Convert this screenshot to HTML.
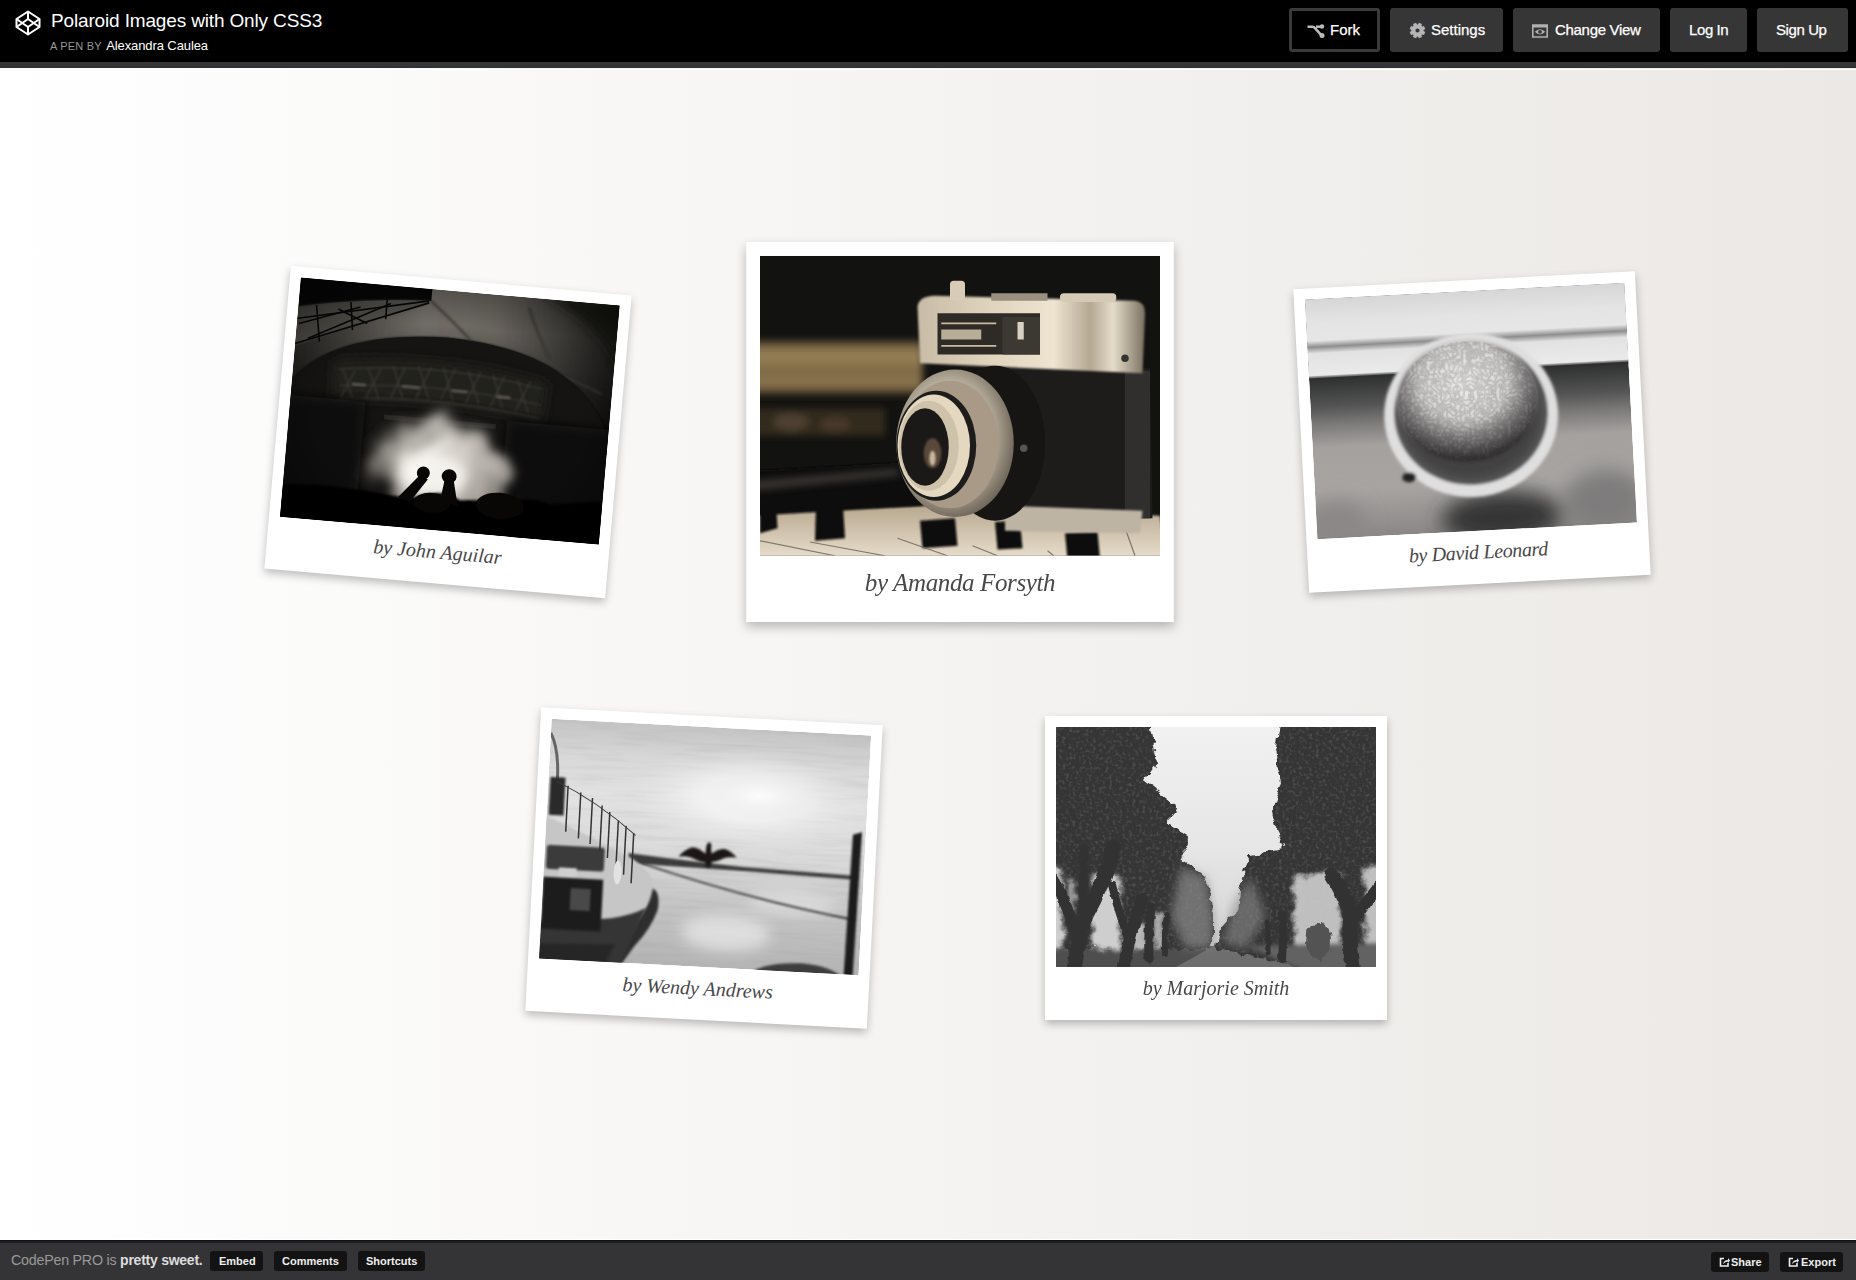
<!DOCTYPE html>
<html><head><meta charset="utf-8">
<style>
*{margin:0;padding:0;box-sizing:border-box}
html,body{width:1856px;height:1280px;overflow:hidden;background:#000;font-family:"Liberation Sans",sans-serif}
#hdr{position:absolute;left:0;top:0;width:1856px;height:62px;background:#000}
#hbar{position:absolute;left:0;top:62px;width:1856px;height:6px;background:linear-gradient(#383839,#2f3133)}
#content{position:absolute;left:0;top:68px;width:1856px;height:1172px;background:linear-gradient(to right,#ffffff 0%,#ebe8e5 100%);overflow:hidden}
#content:before{content:"";position:absolute;left:0;top:1px;width:100%;height:1px;background:#fff}
#content:after{content:"";position:absolute;left:0;bottom:0;width:100%;height:1px;background:#fff}
#ftr{position:absolute;left:0;top:1240px;width:1856px;height:40px;background:#343436;border-top:3px solid #1d1e20}
#ftr:before{content:"";position:absolute;left:0;top:-3px;width:100%;height:1px;background:#111214}
.logo{position:absolute;left:15px;top:10px}
.title{position:absolute;left:51px;top:10px;color:#fff;font-size:19px;letter-spacing:-0.15px;white-space:nowrap}
.sub{position:absolute;left:50px;top:36px;white-space:nowrap}
.sub .a{color:#999;font-size:11px;letter-spacing:0.2px}
.sub .b{color:#fff;font-size:13px;letter-spacing:-0.1px}
.btn{position:absolute;top:8px;height:44px;background:#363636;border-radius:3px;color:#fff;font-size:15px;line-height:44px;white-space:nowrap}
.btn span{position:absolute;top:0;-webkit-text-stroke:0.25px #fff}
.fbtn{position:absolute;top:1251px;height:20px;background:#131313;border-radius:3px;color:#eee;font-size:11px;font-weight:bold;line-height:20px;white-space:nowrap}
.fbtn span{position:absolute;top:0}
.pol{position:absolute;width:342px;height:304px;background:#fff;box-shadow:0 4px 8px rgba(0,0,0,.25)}
.pol .ph{position:absolute;left:11px;top:11px;width:320px;height:240px;overflow:hidden}
.pol .cap{position:absolute;left:0;top:261px;width:342px;text-align:center;font-family:"Liberation Serif",serif;font-style:italic;font-size:20px;color:#484848;white-space:nowrap}
</style></head><body>
<div id="hdr">
  <svg class="logo" width="26" height="26" viewBox="0 0 26 26"><g fill="none" stroke="#fff" stroke-width="2" stroke-linejoin="round"><path d="M13 1.5 L24.5 9 V17 L13 24.5 L1.5 17 V9 Z"/><path d="M13 1.5 V9 M13 17 V24.5 M1.5 9 L13 17 L24.5 9 M1.5 17 L13 9 L24.5 17"/></g></svg>
  <div class="title">Polaroid Images with Only CSS3</div>
  <div class="sub"><span class="a">A PEN BY</span> <span class="b">Alexandra Caulea</span></div>

  <div class="btn" style="left:1289px;width:91px;background:#000;border:3px solid #3a3a3a;line-height:38px"><svg style="position:absolute;left:14px;top:13px" width="20" height="16" viewBox="0 0 20 16"><g fill="none" stroke="#bbb" stroke-width="2.5" stroke-linecap="butt"><path d="M1.5 2.7 H6.5 Q8 2.7 9 4.2 L16 11.8"/><path d="M10 2.7 H15.5"/></g><circle cx="16" cy="2.5" r="2.2" fill="#bbb"/><circle cx="16" cy="11.5" r="2.5" fill="#bbb"/></svg><span style="left:38px">Fork</span></div>
  <div class="btn" style="left:1390px;width:113px"><svg style="position:absolute;left:18.5px;top:14.3px" width="17" height="17" viewBox="0 0 17 17"><path fill-rule="evenodd" fill="#b5b5b7" d="M8.94 2.42 L9.94 0.73 L12.98 1.99 L12.49 3.88 L13.12 4.51 L15.01 4.02 L16.27 7.06 L14.58 8.06 L14.58 8.94 L16.27 9.94 L15.01 12.98 L13.12 12.49 L12.49 13.12 L12.98 15.01 L9.94 16.27 L8.94 14.58 L8.06 14.58 L7.06 16.27 L4.02 15.01 L4.51 13.12 L3.88 12.49 L1.99 12.98 L0.73 9.94 L2.42 8.94 L2.42 8.06 L0.73 7.06 L1.99 4.02 L3.88 4.51 L4.51 3.88 L4.02 1.99 L7.06 0.73 L8.06 2.42Z M6.4 8.5 a2.1 2.1 0 1 0 4.2 0 a2.1 2.1 0 1 0 -4.2 0Z"/></svg><span style="left:41px">Settings</span></div>
  <div class="btn" style="left:1513px;width:147px"><svg style="position:absolute;left:18px;top:15px" width="18" height="16" viewBox="0 0 18 16"><path fill-rule="evenodd" fill="#b0b0b2" d="M1 1.2 H17 V14.8 H1Z M2.6 4.4 V13.2 H15.4 V4.4Z"/><path fill-rule="evenodd" fill="#b0b0b2" d="M3.8 8.8 Q9 3.6 14.2 8.8 Q9 14 3.8 8.8Z M7.1 8.8 a1.9 1.9 0 1 0 3.8 0 a1.9 1.9 0 1 0 -3.8 0Z"/></svg><span style="left:42px;letter-spacing:-0.3px">Change View</span></div>
  <div class="btn" style="left:1670px;width:77px"><span style="left:19px;letter-spacing:-0.4px">Log In</span></div>
  <div class="btn" style="left:1757px;width:91px"><span style="left:19px;letter-spacing:-0.4px">Sign Up</span></div>
</div>
<div id="hbar"></div>

<div id="content">
</div>


<div class="pol" id="p1" style="left:277px;top:280px;transform:rotate(5deg)"><div class="ph"><svg width="320" height="240" viewBox="0 0 320 240">
<defs>
<radialGradient id="p1glow" cx="0.5" cy="0.55" r="0.5"><stop offset="0" stop-color="#f7f5f1"/><stop offset="0.4" stop-color="#e2ded8"/><stop offset="0.75" stop-color="#7a7670"/><stop offset="1" stop-color="#1a1816" stop-opacity="0"/></radialGradient>
<linearGradient id="p1roof" x1="0" y1="0" x2="1" y2="0"><stop offset="0" stop-color="#3a3834"/><stop offset="0.4" stop-color="#716d67"/><stop offset="0.62" stop-color="#6a6660"/><stop offset="0.82" stop-color="#4a4743"/><stop offset="1" stop-color="#262422"/></linearGradient>
<linearGradient id="p1dark" x1="0" y1="0" x2="0" y2="1"><stop offset="0" stop-color="#000" stop-opacity="0"/><stop offset="1" stop-color="#000" stop-opacity="0.88"/></linearGradient>
<radialGradient id="p1vig" cx="0.5" cy="0.55" r="0.75"><stop offset="0.55" stop-color="#000" stop-opacity="0"/><stop offset="1" stop-color="#000" stop-opacity="0.6"/></radialGradient>
<filter id="p1b" x="-50%" y="-50%" width="200%" height="200%"><feGaussianBlur stdDeviation="6"/></filter>
<filter id="p1b1" x="-20%" y="-20%" width="140%" height="140%"><feGaussianBlur stdDeviation="1.2"/></filter>
<filter id="p1smoke" x="-40%" y="-40%" width="180%" height="180%">
<feTurbulence type="fractalNoise" baseFrequency="0.035" numOctaves="3" seed="2" result="n"/>
<feDisplacementMap in="SourceGraphic" in2="n" scale="34" xChannelSelector="R" yChannelSelector="G" result="d"/>
<feGaussianBlur in="d" stdDeviation="5"/>
</filter>
</defs>
<rect width="320" height="240" fill="#0e0d0c"/>
<path d="M-5 -5 L325 -5 L325 150 Q300 50 152 47 Q30 50 -5 110Z" fill="url(#p1roof)" filter="url(#p1b1)"/>
<path d="M240 -5 L330 -5 L330 70 Q300 15 240 -5Z" fill="#1c1a18" filter="url(#p1b)"/>
<rect x="-5" y="35" width="330" height="115" fill="url(#p1dark)"/>
<path d="M-5 -5 L132 -5 L132 12 Q60 15 -5 30Z" fill="#070707"/>
<path d="M-5 30 Q60 15 132 12 L128 16 Q60 40 -5 70Z" fill="#55524d" filter="url(#p1b1)"/>
<g stroke="#080808" stroke-width="1.6" fill="none">
<path d="M-5 42 L130 12"/><path d="M-5 68 L130 14"/><path d="M18 26 L24 62"/><path d="M52 20 L56 48"/><path d="M88 14 L88 34"/><path d="M12 60 L92 18"/><path d="M2 46 L62 24"/><path d="M40 28 L70 40"/>
</g>
<g stroke="#3a3733" stroke-width="2.5" fill="none" opacity="0.8" filter="url(#p1b1)">
<path d="M132 12 Q155 30 175 48"/><path d="M230 10 Q240 35 255 60"/><path d="M20 85 Q150 25 310 90"/>
</g>
<path d="M-5 110 Q30 50 152 47 Q300 50 325 150 L325 245 L-5 245Z" fill="#151413"/>
<path d="M40 80 Q150 62 255 84 L252 122 Q150 108 42 118Z" fill="#22201e" filter="url(#p1b)"/>
<g stroke="#4a4742" stroke-width="1.1" opacity="0.75" fill="none" filter="url(#p1b1)">
<path d="M45 88 Q150 72 250 90"/><path d="M48 104 Q150 92 250 106"/><path d="M50 117 Q150 106 250 120"/>
<path d="M50 88 L62 116 M75 84 L88 114 M100 80 L112 112 M125 78 L138 110 M150 77 L162 109 M175 78 L188 110 M200 80 L212 112 M225 83 L238 115"/>
<path d="M62 88 L50 116 M88 84 L75 114 M112 80 L100 112 M138 78 L125 110 M162 77 L150 109 M188 78 L175 110 M212 80 L200 112 M238 83 L225 115"/>
</g>
<g fill="#6a665f" opacity="0.7" filter="url(#p1b1)"><rect x="60" y="100" width="14" height="3"/><rect x="110" y="98" width="18" height="3"/><rect x="160" y="98" width="16" height="3"/><rect x="205" y="100" width="14" height="3"/></g>
<rect x="95" y="129" width="112" height="5" fill="#2a2826"/>
<rect x="-5" y="118" width="80" height="130" fill="#0b0a09" filter="url(#p1b)"/>
<rect x="218" y="125" width="115" height="125" fill="#090807" filter="url(#p1b)"/>
<g filter="url(#p1smoke)">
<ellipse cx="152" cy="168" rx="78" ry="56" fill="url(#p1glow)"/>
<ellipse cx="185" cy="180" rx="42" ry="35" fill="#c8c3bb" opacity="0.65"/>
</g>
<ellipse cx="150" cy="186" rx="32" ry="22" fill="#faf8f4" filter="url(#p1b)" opacity="0.85"/>
<path d="M-5 208 Q40 202 100 208 Q130 212 140 206 Q160 198 178 208 Q200 204 222 210 Q242 196 268 204 L325 196 L325 245 L-5 245Z" fill="#060505" filter="url(#p1b1)"/>
<g fill="#080706">
<path d="M116 210 L136 186 L144 190 L128 214Z"/><ellipse cx="139" cy="184" rx="6.5" ry="6.5"/>
<path d="M158 210 L161 188 L170 189 L176 214Z"/><ellipse cx="165" cy="185" rx="7.5" ry="7"/>
<ellipse cx="150" cy="213" rx="18" ry="10"/>
<ellipse cx="218" cy="210" rx="24" ry="13"/>
</g>
<rect width="320" height="240" fill="url(#p1vig)"/>
</svg>
</div><div class="cap">by John Aguilar</div></div>
<div class="pol" id="p2" style="left:789px;top:280px;transform:scale(1.25)"><div class="ph"><svg width="320" height="240" viewBox="0 0 320 240">
<defs>
<linearGradient id="p2top" x1="0" y1="0" x2="1" y2="0"><stop offset="0" stop-color="#c8bca6"/><stop offset="0.35" stop-color="#e2d6c0"/><stop offset="0.6" stop-color="#eee4d0"/><stop offset="0.76" stop-color="#b4a892"/><stop offset="0.86" stop-color="#e6dcca"/><stop offset="1" stop-color="#7a7060"/></linearGradient>
<linearGradient id="p2band" x1="0" y1="0" x2="0" y2="1"><stop offset="0" stop-color="#54462e"/><stop offset="0.25" stop-color="#9a8258"/><stop offset="0.55" stop-color="#7e6a46"/><stop offset="0.8" stop-color="#8a744e"/><stop offset="1" stop-color="#2a2318"/></linearGradient>
<linearGradient id="p2keys" x1="0" y1="0" x2="0" y2="1"><stop offset="0" stop-color="#b8a890"/><stop offset="1" stop-color="#ece2d0"/></linearGradient>
<radialGradient id="p2ring" cx="0.45" cy="0.45" r="0.6"><stop offset="0" stop-color="#e4dccc"/><stop offset="0.6" stop-color="#bcb2a0"/><stop offset="1" stop-color="#625a4e"/></radialGradient>
<filter id="p2b" x="-30%" y="-30%" width="160%" height="160%"><feGaussianBlur stdDeviation="3"/></filter>
<filter id="p2b1" x="-20%" y="-20%" width="140%" height="140%"><feGaussianBlur stdDeviation="0.7"/></filter>
</defs>
<rect width="320" height="240" fill="#121211"/>
<g filter="url(#p2b)">
<rect x="-10" y="68" width="140" height="44" fill="url(#p2band)"/>
<rect x="-10" y="122" width="110" height="22" fill="#33291c"/>
<ellipse cx="25" cy="133" rx="14" ry="7" fill="#4e4130"/><ellipse cx="60" cy="135" rx="12" ry="6" fill="#46392a"/>
</g>
<!-- piano keys -->
<path d="M-5 205 L130 200 L320 208 L325 245 L-5 245Z" fill="url(#p2keys)" filter="url(#p2b1)"/>
<g fill="#0d0c0b" filter="url(#p2b1)">
<path d="M-5 172 L125 165 L130 200 L-5 208Z"/>
<path d="M0 186 L12 184 L14 218 L0 222Z"/>
<path d="M45 194 Q55 190 66 194 L68 226 L44 228Z"/>
<path d="M128 212 L156 210 L158 232 L130 234Z"/>
<path d="M188 213 L208 212 L210 234 L190 235Z"/>
<path d="M244 222 L270 221 L272 242 L246 243Z"/>
</g>
<g fill="#4a4540" opacity="0.7" filter="url(#p2b)"><path d="M-5 180 L110 170 L112 176 L-5 188Z"/></g>
<g stroke="#6a6258" stroke-width="1" opacity="0.8">
<path d="M0 228 L60 240"/><path d="M40 229 L100 240"/><path d="M110 226 L150 240"/><path d="M170 232 L190 240"/><path d="M230 236 L235 240"/><path d="M290 212 L300 240"/>
</g>
<!-- camera body -->
<path d="M200 88 L312 90 L314 210 L200 212Z" fill="#1d1c1b"/>
<rect x="292" y="92" width="20" height="118" fill="#302f2d"/>
<path d="M196 200 L306 204 L304 222 L196 220Z" fill="#bdb4a4" filter="url(#p2b1)"/>
<!-- top plate -->
<path d="M126 40 Q128 32 140 32 L300 36 Q308 37 308 46 L306 94 L128 86Z" fill="url(#p2top)" filter="url(#p2b1)"/>
<rect x="142" y="46" width="82" height="33" fill="#2e2a25"/>
<g stroke="#c8bca4" stroke-width="1.4"><path d="M145 54 H189"/><path d="M145 72 H189"/></g>
<rect x="145" y="59" width="32" height="8" fill="#b8ad98"/>
<rect x="194" y="49" width="30" height="30" fill="#3c3832"/>
<rect x="206" y="53" width="5" height="14" fill="#d8d0c0"/>
<rect x="152" y="20" width="12" height="16" rx="3" fill="#d8ccb6"/>
<rect x="185" y="30" width="45" height="6" fill="#9a9080"/>
<rect x="240" y="30" width="45" height="7" rx="3" fill="#d4cab6"/>
<circle cx="292" cy="82" r="3" fill="#333"/>
<!-- lens -->
<ellipse cx="188" cy="150" rx="40" ry="62" fill="#161514"/>
<ellipse cx="156" cy="150" rx="47" ry="59" fill="url(#p2ring)"/>
<ellipse cx="152" cy="151" rx="39" ry="51" fill="#a89a86"/>
<ellipse cx="141" cy="152" rx="32" ry="44" fill="#1e1c1a"/>
<ellipse cx="139" cy="152" rx="29" ry="41" fill="#e4d8c0"/>
<ellipse cx="135" cy="152" rx="24" ry="36" fill="#cfc2aa"/>
<ellipse cx="132" cy="153" rx="19" ry="31" fill="#1a1918"/>
<ellipse cx="138" cy="158" rx="7" ry="12" fill="#5a4a3a" filter="url(#p2b1)"/>
<ellipse cx="138" cy="162" rx="2.5" ry="6" fill="#c9b8a0" filter="url(#p2b1)"/>
<circle cx="211" cy="154" r="3" fill="#555"/>
</svg>
</div><div class="cap" style="letter-spacing:-0.3px">by Amanda Forsyth</div></div>
<div class="pol" id="p3" style="left:1301px;top:280px;transform:rotate(-3deg)"><div class="ph"><svg width="320" height="240" viewBox="0 0 320 240">
<defs>
<linearGradient id="p3floor" x1="0" y1="0" x2="0" y2="240" gradientUnits="userSpaceOnUse"><stop offset="0.33" stop-color="#2e2f2f"/><stop offset="0.45" stop-color="#545454"/><stop offset="0.53" stop-color="#7e7c7b"/><stop offset="0.62" stop-color="#a4a19f"/><stop offset="0.8" stop-color="#a7a4a2"/><stop offset="1" stop-color="#8a8786"/></linearGradient>
<linearGradient id="p3top" x1="0" y1="0" x2="0" y2="80" gradientUnits="userSpaceOnUse"><stop offset="0" stop-color="#d6d6d6"/><stop offset="0.3" stop-color="#e4e4e4"/><stop offset="0.52" stop-color="#e6e6e6"/><stop offset="0.6" stop-color="#8e8e8e"/><stop offset="0.68" stop-color="#e2e2e2"/><stop offset="0.95" stop-color="#eaeaea"/><stop offset="1" stop-color="#d0d0d0"/></linearGradient>
<radialGradient id="p3cac" cx="0.48" cy="0.34" r="0.62"><stop offset="0" stop-color="#eeedec"/><stop offset="0.5" stop-color="#d8d6d4"/><stop offset="0.72" stop-color="#8a8888"/><stop offset="1" stop-color="#3a3838"/></radialGradient>
<radialGradient id="p3pot" cx="0.5" cy="0.5" r="0.5"><stop offset="0" stop-color="#333"/><stop offset="0.85" stop-color="#444"/><stop offset="1" stop-color="#5a5858"/></radialGradient>
<filter id="p3b" x="-30%" y="-30%" width="160%" height="160%"><feGaussianBlur stdDeviation="1.8"/></filter>
<filter id="p3b2" x="-50%" y="-50%" width="200%" height="200%"><feGaussianBlur stdDeviation="10"/></filter>
<filter id="p3tex" x="0" y="0" width="100%" height="100%">
<feTurbulence type="turbulence" baseFrequency="0.22" numOctaves="2" seed="4" result="n"/>
<feColorMatrix in="n" type="matrix" values="0 0 0 0 0  0 0 0 0 0  0 0 0 0 0  0 0 0 -2.5 1.3" result="a"/>
<feComposite in="a" in2="SourceGraphic" operator="in"/>
</filter>
</defs>
<rect width="320" height="240" fill="url(#p3floor)"/>
<g filter="url(#p3b2)">
<ellipse cx="185" cy="228" rx="60" ry="26" fill="#353535"/>
<ellipse cx="290" cy="215" rx="40" ry="30" fill="#7e7c7b"/>
<ellipse cx="20" cy="225" rx="30" ry="22" fill="#8a8786"/>
</g>
<rect x="-10" y="-10" width="340" height="89" fill="url(#p3top)"/>
<rect x="-10" y="78" width="340" height="3" fill="#2e2f2f" filter="url(#p3b)"/>
<g filter="url(#p3b)">
<ellipse cx="160" cy="124" rx="87" ry="82" fill="#e0dfdf"/>
<ellipse cx="160" cy="122" rx="77" ry="72" fill="url(#p3pot)"/>
<ellipse cx="157" cy="110" rx="71" ry="62" fill="url(#p3cac)"/>
<ellipse cx="95" cy="183" rx="7" ry="5" fill="#222"/>
</g>
<ellipse cx="157" cy="110" rx="69" ry="60" fill="#000" filter="url(#p3tex)" opacity="0.16"/>
</svg>
</div><div class="cap" style="letter-spacing:-0.35px">by David Leonard</div></div>
<div class="pol" id="p4" style="left:533px;top:716px;transform:rotate(3deg)"><div class="ph"><svg width="320" height="240" viewBox="0 0 320 240">
<defs>
<linearGradient id="p4sky" x1="0" y1="0" x2="0" y2="1"><stop offset="0" stop-color="#c4c4c4"/><stop offset="0.15" stop-color="#d8d8d8"/><stop offset="0.3" stop-color="#e2e2e2"/><stop offset="0.5" stop-color="#dcdcdc"/><stop offset="0.75" stop-color="#c4c4c4"/><stop offset="1" stop-color="#b4b4b4"/></linearGradient>
<radialGradient id="p4sun" cx="0.5" cy="0.5" r="0.5"><stop offset="0" stop-color="#fcfcfc"/><stop offset="0.45" stop-color="#f2f2f2" stop-opacity="0.85"/><stop offset="1" stop-color="#e6e6e6" stop-opacity="0"/></radialGradient>
<filter id="p4b" x="-30%" y="-30%" width="160%" height="160%"><feGaussianBlur stdDeviation="0.9"/></filter>
<filter id="p4b2" x="-50%" y="-50%" width="200%" height="200%"><feGaussianBlur stdDeviation="7"/></filter>
<filter id="p4tex" x="0" y="0" width="100%" height="100%">
<feTurbulence type="fractalNoise" baseFrequency="0.015 0.25" numOctaves="2" seed="7" result="n"/>
<feColorMatrix in="n" type="matrix" values="0 0 0 0 0.3  0 0 0 0 0.3  0 0 0 0 0.3  0 0 0 -3 1.6" result="a"/>
<feComposite in="a" in2="SourceGraphic" operator="in"/>
</filter>
</defs>
<rect width="320" height="240" fill="url(#p4sky)"/>
<rect width="320" height="240" fill="#000" filter="url(#p4tex)" opacity="0.12"/>
<ellipse cx="200" cy="70" rx="120" ry="50" fill="url(#p4sun)"/>
<ellipse cx="212" cy="66" rx="55" ry="24" fill="url(#p4sun)"/>
<g filter="url(#p4b2)" fill="#e6e6e6"><ellipse cx="185" cy="205" rx="45" ry="18" opacity="0.8"/><ellipse cx="250" cy="172" rx="45" ry="12" opacity="0.6"/></g>
<path d="M84 130 Q130 134 200 138 L314 141 L314 145 L200 142 Q130 141 84 140Z" fill="#3a3a3a" filter="url(#p4b)"/>
<path d="M92 138 Q205 170 313 185" stroke="#2a2a2a" stroke-width="1.8" fill="none" filter="url(#p4b)"/>
<g fill="#1a1818" filter="url(#p4b)">
<path d="M161 127 Q153 120 147 121 Q139 124 134 131 Q144 129 151 133 Q157 136 162 135Z"/>
<path d="M166 127 Q174 120 180 121 Q187 123 192 129 Q182 128 176 132 Q170 135 165 135Z"/>
<path d="M161 122 Q161 116 164 115 Q167 116 166 121 L168 133 Q167 140 164 140 Q161 140 160 133Z"/>
</g>
<path d="M-5 95 L45 116 L89 136 Q112 150 110 164 Q108 180 103 186 Q95 200 85 214 L65 245 L-5 245Z" fill="#c6c6c6" filter="url(#p4b)"/>
<path d="M110 164 Q118 168 116 185 Q110 205 95 222 L80 245 L65 245 L85 214 Q97 198 103 186 Q108 178 110 164Z" fill="#2e2e2e" filter="url(#p4b)"/>
<path d="M-5 205 Q40 200 70 196 Q90 192 104 184 L80 245 L-5 245Z" fill="#353535" filter="url(#p4b)"/>
<path d="M-5 225 L75 222 L65 245 L-5 245Z" fill="#262626" filter="url(#p4b)"/>
<rect x="2" y="126" width="58" height="24" rx="3" fill="#3a3a3a" filter="url(#p4b)"/>
<rect x="15" y="148" width="18" height="12" fill="#cfcfcf" filter="url(#p4b)"/>
<rect x="0" y="158" width="60" height="52" fill="#1c1c1c" filter="url(#p4b)"/>
<rect x="28" y="168" width="20" height="22" fill="#4a4a4a" filter="url(#p4b)"/>
<path d="M0 14 Q9 30 9 60" stroke="#666" stroke-width="3" fill="none"/>
<rect x="2" y="58" width="15" height="38" fill="#2a2a2a" filter="url(#p4b)"/>
<g stroke="#333" stroke-width="1.5">
<path d="M20 66 V112"/><path d="M33 72 V118"/><path d="M45 77 V123"/><path d="M55 84 V130"/><path d="M63 90 V136"/><path d="M72 98 V145"/><path d="M80 103 V152"/><path d="M88 110 V160"/>
</g>
<path d="M8 62 Q50 80 90 112" stroke="#3c3c3c" stroke-width="1" fill="none"/>
<ellipse cx="74" cy="150" rx="4" ry="12" fill="#e2e2e2"/>
<path d="M307 100 L316 97 L314 245 L305 245Z" fill="#1a1a1a" filter="url(#p4b)"/>
<path d="M210 244 Q225 232 262 231 Q292 232 305 244Z" fill="#3e3e3e" filter="url(#p4b)"/>
</svg>
</div><div class="cap">by Wendy Andrews</div></div>
<div class="pol" id="p5" style="left:1045px;top:716px"><div class="ph"><svg width="320" height="240" viewBox="0 0 320 240">
<defs>
<linearGradient id="p5sky" x1="0" y1="0" x2="0" y2="1"><stop offset="0" stop-color="#f1f1f1"/><stop offset="0.5" stop-color="#e6e6e6"/><stop offset="0.9" stop-color="#d4d4d4"/><stop offset="1" stop-color="#a8a8a8"/></linearGradient>
<filter id="p5f" x="-20%" y="-20%" width="140%" height="140%">
<feTurbulence type="fractalNoise" baseFrequency="0.09" numOctaves="3" seed="5" result="n"/>
<feDisplacementMap in="SourceGraphic" in2="n" scale="10" xChannelSelector="R" yChannelSelector="G" result="d"/>
<feGaussianBlur in="d" stdDeviation="0.6"/>
</filter>
<filter id="p5f2" x="-20%" y="-20%" width="140%" height="140%">
<feTurbulence type="fractalNoise" baseFrequency="0.15" numOctaves="2" seed="11" result="n"/>
<feDisplacementMap in="SourceGraphic" in2="n" scale="4" xChannelSelector="R" yChannelSelector="G" result="d"/>
<feGaussianBlur in="d" stdDeviation="0.5"/>
</filter>
<filter id="p5tex" x="0" y="0" width="100%" height="100%">
<feTurbulence type="fractalNoise" baseFrequency="0.3" numOctaves="2" seed="9" result="n"/>
<feColorMatrix in="n" type="matrix" values="0 0 0 0 0.65  0 0 0 0 0.65  0 0 0 0 0.65  0 0 0 -3 1.55" result="a"/>
<feComposite in="a" in2="SourceGraphic" operator="in"/>
</filter>
<filter id="p5b" x="-50%" y="-50%" width="200%" height="200%"><feGaussianBlur stdDeviation="5"/></filter>
<filter id="p5b3" x="-50%" y="-50%" width="200%" height="200%"><feGaussianBlur stdDeviation="2.2"/></filter>
<clipPath id="p5c"><path d="M-20 -20 L92 -20 L101 36 L88 54 L120 79 L112 97 L133 112 L124 131 L148 150 L156 169 L157 187 L157 214 L154 222 L-20 222Z M228 -20 L340 -20 L340 260 L160 222 L165 201 L172 193 L180 187 L182 163 L189 142 L195 127 L229 122 L223 112 L216 84 L225 56 L219 24Z"/></clipPath>
</defs>
<rect width="320" height="240" fill="url(#p5sky)"/>
<rect y="219" width="320" height="21" fill="#646464"/>
<rect y="219" width="150" height="21" fill="#4e4e4e"/>
<path d="M120 240 L158 219 L172 219 L260 240Z" fill="#6e6e6e"/>
<g filter="url(#p5f)">
<path fill="#363636" d="M-20 -20 L92 -20 L101 36 L88 54 L120 79 L112 97 L133 112 L124 131 L148 150 L156 169 L157 187 L157 214 L154 222 L-20 222Z"/>
<path fill="#343434" d="M228 -20 L340 -20 L340 260 L160 222 L165 201 L172 193 L180 187 L182 163 L189 142 L195 127 L229 122 L223 112 L216 84 L225 56 L219 24Z"/>
</g>
<rect width="320" height="240" fill="#000" filter="url(#p5tex)" opacity="0.16" clip-path="url(#p5c)"/>
<g filter="url(#p5b)">
<path fill="#8a8a8a" d="M125 140 L150 150 L158 190 L157 220 L130 222 L115 190Z" opacity="0.7"/>
<path fill="#8a8a8a" d="M195 150 L178 175 L166 215 L190 222 L210 190Z" opacity="0.6"/>
</g>
<g filter="url(#p5f)"><g filter="url(#p5b3)" fill="#cecece">
<path d="M-10 136 L6 140 L8 222 L-10 222Z"/>
<path d="M12 152 L19 155 L19 186 L12 186Z" opacity="0.7"/>
<path d="M36 148 Q50 142 65 150 L65 222 L36 222Z"/>
<path d="M75 198 L90 196 L91 222 L75 222Z" opacity="0.85"/>
<path d="M97 186 L108 184 L109 222 L97 222Z" opacity="0.75"/>
<path d="M238 150 L284 144 L284 222 L238 222Z" opacity="0.9"/>
<path d="M308 140 L330 138 L330 222 L310 222Z" opacity="0.9"/>
</g></g>
<path d="M190 219 L330 216 L330 245 L250 245Z" fill="#626262" filter="url(#p5b3)"/>
<g fill="none" stroke="#333333" stroke-linecap="round" filter="url(#p5f2)">
<path d="M18 245 Q22 210 30 188 Q46 160 58 120" stroke-width="15"/>
<path d="M20 205 Q10 175 -4 150" stroke-width="11"/>
<path d="M26 192 Q28 160 28 122" stroke-width="9"/>
<path d="M68 240 Q74 205 86 172" stroke-width="12"/>
<path d="M72 212 Q62 182 56 158" stroke-width="8"/>
<path d="M93 232 Q92 205 95 180" stroke-width="9"/>
<path d="M109 226 Q108 205 111 188" stroke-width="6"/>
<path d="M298 245 Q292 212 295 188 Q288 166 276 148" stroke-width="15"/>
<path d="M296 195 Q310 176 324 158" stroke-width="11"/>
<path d="M226 232 Q228 210 226 188" stroke-width="8"/>
<path d="M212 226 Q213 210 211 195" stroke-width="5"/>
</g>
<g filter="url(#p5f)"><ellipse cx="263" cy="214" rx="13" ry="19" fill="#525252"/></g>
</svg>
</div><div class="cap">by Marjorie Smith</div></div>

<div id="ftr"></div>
<div style="position:absolute;left:11px;top:1250px;font-size:14.3px;line-height:20px;white-space:nowrap;letter-spacing:-0.25px"><span style="color:#999">CodePen PRO is </span><span style="color:#ddd;font-weight:bold;font-size:14px">pretty sweet.</span></div>
<div class="fbtn" style="left:210px;width:53px"><span style="left:9px">Embed</span></div>
<div class="fbtn" style="left:274px;width:73px"><span style="left:8px">Comments</span></div>
<div class="fbtn" style="left:358px;width:67px"><span style="left:8px">Shortcuts</span></div>
<div class="fbtn" style="left:1711px;top:1252px;width:58px"><svg style="position:absolute;left:8px;top:5px" width="11" height="10" viewBox="0 0 11 10"><path d="M5 1.5H1.5V9H9V6" fill="none" stroke="#eee" stroke-width="1.6"/><path d="M4 7 Q5 3 9 3 V1 L11 3.5 L9 6 V4.5 Q6 4.5 4 7Z" fill="#eee"/></svg><span style="left:20px">Share</span></div>
<div class="fbtn" style="left:1780px;top:1252px;width:63px"><svg style="position:absolute;left:8px;top:5px" width="11" height="10" viewBox="0 0 11 10"><path d="M5 1.5H1.5V9H9V6" fill="none" stroke="#eee" stroke-width="1.6"/><path d="M4 7 Q5 3 9 3 V1 L11 3.5 L9 6 V4.5 Q6 4.5 4 7Z" fill="#eee"/></svg><span style="left:21px">Export</span></div>
</body></html>
